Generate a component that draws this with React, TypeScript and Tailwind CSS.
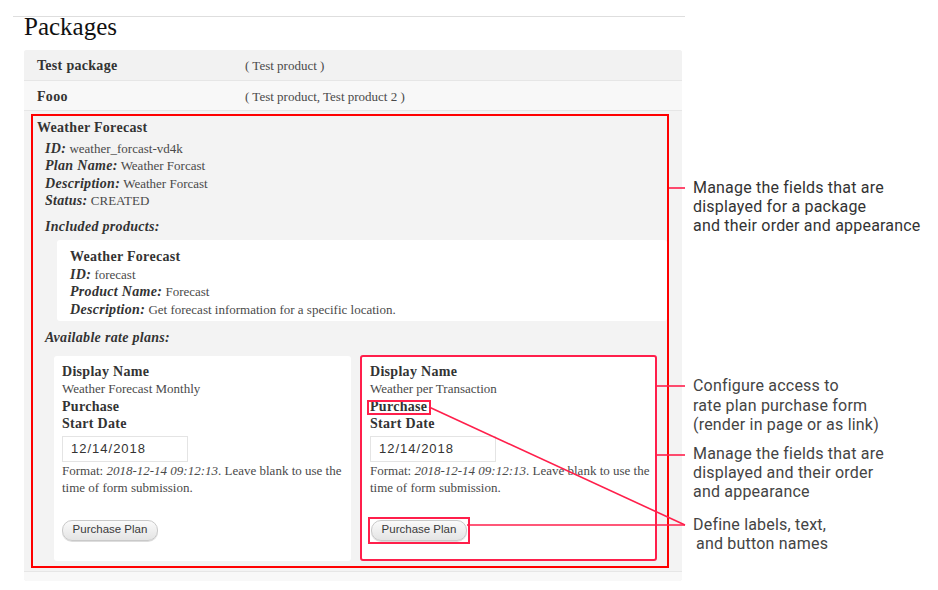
import React from "react";

const RED = "#ff1f4b";

function Field({ label, value }: { label: string; value: string }) {
  return (
    <div>
      <span className="font-bold italic text-[#333] text-[14px] tracking-[0.3px]">{label}</span> {value}
    </div>
  );
}

function Bold({ children }: { children: React.ReactNode }) {
  return <div className="font-bold text-[#333] text-[14px] tracking-[0.3px]">{children}</div>;
}

function Card({ name, highlight }: { name: string; highlight?: boolean }) {
  return (
    <div
      className={
        highlight
          ? "bg-white rounded-[3px] border-2 border-[#ff1f4b] px-2 pt-[6px] pb-[17px] -mt-px"
          : "bg-white rounded-[3px] px-2 pt-[7px] pb-5"
      }
    >
      <Bold>Display Name</Bold>
      <div>{name}</div>
      <Bold>
        {highlight ? (
          <span className="relative">
            Purchase
            <span className="absolute -left-[3px] -right-[4px] top-[1px] -bottom-[1px] border-2 border-[#ff1f4b]" />
          </span>
        ) : (
          "Purchase"
        )}
      </Bold>
      <Bold>Start Date</Bold>
      <div className="mt-[3px] w-[126px] h-[26px] border border-[#e4e4e4] bg-white flex items-center pl-2 font-['Liberation_Sans',Arial,sans-serif] text-[13px] tracking-[1px] text-[#333]">
        12/14/2018
      </div>
      <div className="whitespace-nowrap">
        Format: <i>2018-12-14 09:12:13</i>. Leave blank to use the
        <br />
        time of form submission.
      </div>
      <div className="mt-[23px] flex">
        {highlight ? (
          <div className="-ml-[2px] -mt-[3px] -mb-[2px] border-2 border-[#ff1f4b] p-px flex">
            <Btn />
          </div>
        ) : (
          <Btn />
        )}
      </div>
    </div>
  );
}

function Btn() {
  return (
    <div className="h-[21px] w-[96px] rounded-[10px] border border-[#c9c9c9] bg-gradient-to-b from-[#fafafa] to-[#e4e4e4] flex items-center justify-center font-['Liberation_Sans',Arial,sans-serif] text-[11.5px] text-[#3a3a3a] shadow-[0_1px_0_#ddd]">
      Purchase Plan
    </div>
  );
}

export default function App() {
  return (
    <div className="relative w-[938px] h-[590px] bg-white overflow-hidden font-['Liberation_Serif','Times_New_Roman',serif] text-[13px] leading-[17.5px] text-[#4a4a4a]">
      <div className="mt-4 ml-[13px] w-[672px] h-px bg-[#dedede]" />
      <h1 className="ml-6 text-[25px] leading-[20px] text-[#111]">Packages</h1>

      <div className="ml-6 mt-[13px] w-[658px] rounded-[3px] bg-[#f3f3f3] overflow-hidden">
        <div className="h-[31px] border-b border-[#e6e6e6] bg-[#f2f2f2] flex items-center pt-[2px] px-[13px]">
          <div className="w-[208px] font-bold text-[#333] text-[14px] tracking-[0.3px]">Test package</div>
          <div>( Test product )</div>
        </div>
        <div className="h-[30px] border-b border-[#e6e6e6] bg-[#f8f8f8] flex items-center pt-[2px] px-[13px]">
          <div className="w-[208px] font-bold text-[#333] text-[14px] tracking-[0.3px]">Fooo</div>
          <div>( Test product, Test product 2 )</div>
        </div>
        <div className="pt-[3px] pb-[3px] pl-[7px] pr-[13px] border-b border-[#e6e6e6] bg-[#f3f3f3]">
          <div className="border-2 border-[#ff0000] pl-[4px] pt-[3px] pb-[5.5px]">
            <Bold>Weather Forecast</Bold>
            <div className="ml-2">
              <div className="mt-[3px]">
                <Field label="ID:" value="weather_forcast-vd4k" />
                <Field label="Plan Name:" value="Weather Forcast" />
                <Field label="Description:" value="Weather Forcast" />
                <Field label="Status:" value="CREATED" />
              </div>
              <div className="mt-2 font-bold italic text-[#333] text-[14px] tracking-[0.3px]">Included products:</div>
              <div className="mt-[5px] ml-3 bg-white rounded-[3px] pl-[13px] pt-2 pb-[3px]">
                <Bold>Weather Forecast</Bold>
                <Field label="ID:" value="forecast" />
                <Field label="Product Name:" value="Forecast" />
                <Field label="Description:" value="Get forecast information for a specific location." />
              </div>
              <div className="mt-2 font-bold italic text-[#333] text-[14px] tracking-[0.3px]">Available rate plans:</div>
              <div className="mt-[9px] ml-[9px] w-[603px] grid grid-cols-2 gap-[9px] items-start">
                <Card name="Weather Forecast Monthly" />
                <Card name="Weather per Transaction" highlight />
              </div>
            </div>
          </div>
        </div>
        <div className="h-[9px] bg-[#f8f8f8]" />
      </div>

      <svg className="absolute left-0 top-0 pointer-events-none" width="938" height="590">
        <g stroke={RED} strokeWidth="1.6" fill="none">
          <line x1="669" y1="188" x2="685" y2="188" />
          <line x1="657" y1="386" x2="685" y2="386" />
          <line x1="657" y1="455" x2="685" y2="455" />
          <line x1="467" y1="525" x2="685" y2="525" />
          <line x1="429" y1="407" x2="685" y2="525" />
        </g>
      </svg>

      <div className="absolute left-[693px] top-[178px] font-['Roboto',sans-serif] text-[16px] tracking-[0.2px] leading-[19px] text-[#333] whitespace-nowrap">
        Manage the fields that are
        <br />
        displayed for a package
        <br />
        and their order and appearance
      </div>
      <div className="absolute left-[693px] top-[376px] font-['Roboto',sans-serif] text-[16px] tracking-[0.2px] leading-[19.5px] text-[#444] whitespace-nowrap">
        Configure access to
        <br />
        rate plan purchase form
        <br />
        (render in page or as link)
      </div>
      <div className="absolute left-[693px] top-[444px] font-['Roboto',sans-serif] text-[16px] tracking-[0.2px] leading-[19px] text-[#444] whitespace-nowrap">
        Manage the fields that are
        <br />
        displayed and their order
        <br />
        and appearance
      </div>
      <div className="absolute left-[693px] top-[515px] font-['Roboto',sans-serif] text-[16px] tracking-[0.2px] leading-[19px] text-[#444] whitespace-nowrap">
        Define labels, text,
        <br />
        <span className="pl-[3px]">and button names</span>
      </div>
    </div>
  );
}
